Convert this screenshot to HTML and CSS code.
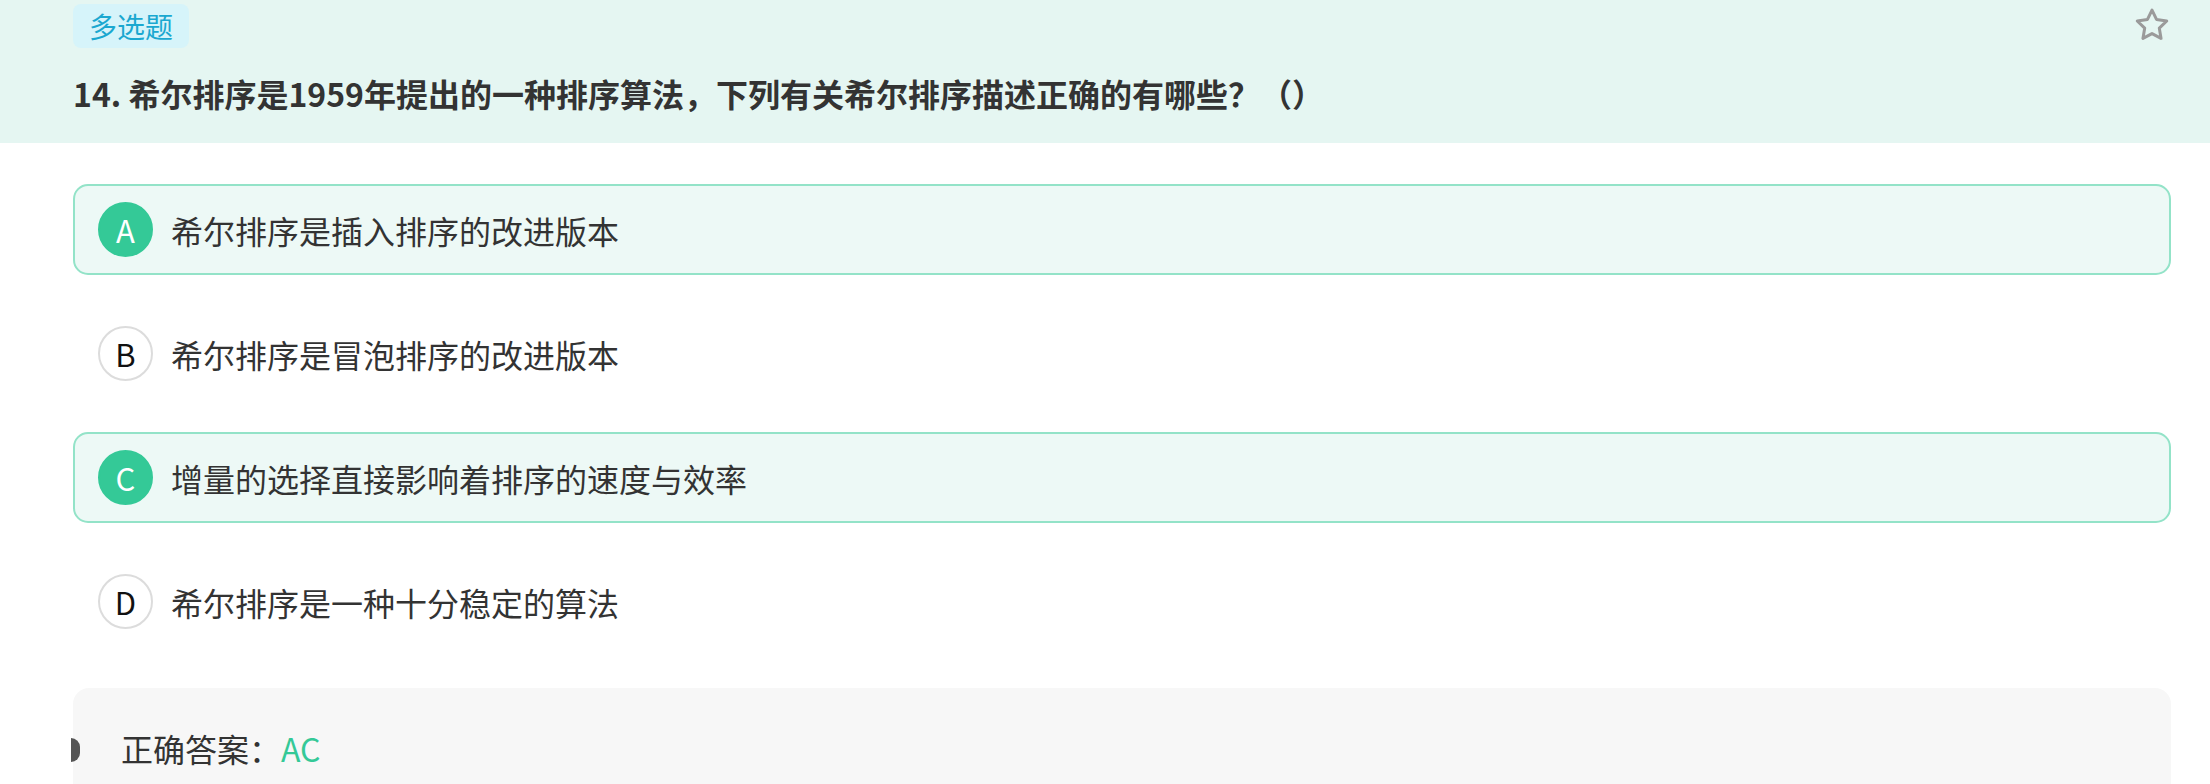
FILE: index.html
```html
<!DOCTYPE html>
<html lang="zh">
<head>
<meta charset="utf-8">
<title>多选题</title>
<link rel="stylesheet" href="styles.css">
</head>
<body>
<div class="header">
  <div class="head-top">
    <span class="tag">多选题</span>
    <svg class="star" viewBox="0 0 24 24" width="38" height="38"><path d="M12 2.6l2.85 5.9 6.45.95-4.68 4.55 1.1 6.45L12 17.4l-5.72 3.05 1.1-6.45L2.7 9.45l6.45-.95z" fill="none" stroke="#9a9a9a" stroke-width="1.9" stroke-linejoin="round"/></svg>
  </div>
  <div class="title">14. 希尔排序是1959年提出的一种排序算法，下列有关希尔排序描述正确的有哪些？（）</div>
</div>
<div class="options">
  <div class="option selected"><span class="letter">A</span><span class="text">希尔排序是插入排序的改进版本</span></div>
  <div class="option"><span class="letter">B</span><span class="text">希尔排序是冒泡排序的改进版本</span></div>
  <div class="option selected"><span class="letter">C</span><span class="text">增量的选择直接影响着排序的速度与效率</span></div>
  <div class="option"><span class="letter">D</span><span class="text">希尔排序是一种十分稳定的算法</span></div>
</div>
<div class="answer">
  <span class="mark"></span>
  <span class="label">正确答案：</span><span class="ans">AC</span>
</div>
</body>
</html>
```
FILE: styles.css
```css
html, body {
  margin: 0;
  padding: 0;
  background: #ffffff;
  font-family: "Noto Sans CJK SC", "Noto Sans", sans-serif;
  color: #333333;
}
.header {
  background: #e5f6f2;
  padding: 4px 39px 28px 73px;
}
.head-top {
  display: flex;
  justify-content: space-between;
  align-items: flex-start;
  height: 44px;
}
.tag {
  display: inline-block;
  background: #d6f4fa;
  color: #1ba8d0;
  font-size: 28px;
  line-height: 44px;
  height: 44px;
  padding: 0 16px;
  border-radius: 8px;
}
.star {
  margin-top: 2px;
  margin-right: 0;
}
.title {
  margin-top: 23px;
  font-size: 32px;
  line-height: 44px;
  font-weight: bold;
  color: #333333;
}
.options {
  margin: 41px 39px 0 73px;
  display: flex;
  flex-direction: column;
  gap: 33px;
}
.option {
  height: 87px;
  border: 2px solid transparent;
  border-radius: 15px;
  display: flex;
  align-items: center;
  padding-left: 23px;
}
.option.selected {
  background: #edf9f6;
  border-color: #93e3c8;
}
.letter {
  width: 51px;
  height: 51px;
  border: 2px solid #dcdcdc;
  border-radius: 50%;
  display: flex;
  align-items: center;
  justify-content: center;
  font-size: 31px;
  color: #111111;
  flex: none;
}
.selected .letter {
  background: #34c997;
  border-color: #34c997;
  color: #ffffff;
}
.text {
  margin-left: 18px;
  font-size: 32px;
  color: #333333;
}
.answer {
  margin: 41px 39px 0 73px;
  height: 120px;
  background: #f7f7f7;
  border-radius: 16px 16px 0 0;
  display: flex;
  align-items: flex-start;
  padding-top: 38px;
  box-sizing: border-box;
  font-size: 32px;
  line-height: 44px;
}
.mark {
  width: 9px;
  height: 24px;
  margin-top: 12px;
  margin-left: -2px;
  margin-right: 41px;
  background: #555555;
  border-radius: 0 12px 12px 0;
}
.label {
  color: #333333;
}
.ans {
  color: #34c997;
}
```
